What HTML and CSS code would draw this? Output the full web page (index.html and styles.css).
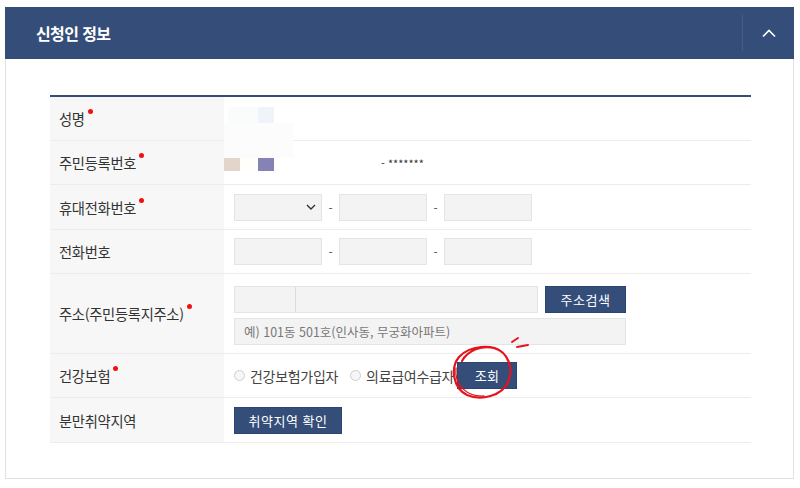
FILE: index.html
```html
<!DOCTYPE html>
<html lang="ko">
<head>
    <meta charset="UTF-8">
    <title>신청인 정보</title>
    <link rel="stylesheet" href="styles.css">
</head>
<body>
<!--신청인 정보-->
<div class="panel">
    <div class="panel-head">
        <h2 class="panel-title">신청인 정보</h2>
        <a href="#" class="toggle">
            <svg width="16" height="10" viewBox="0 0 16 10"><path d="M2 8.5 L8 2.5 L14 8.5" fill="none" stroke="#fff" stroke-width="1.6"/></svg>
        </a>
    </div>
    <div class="panel-body">
        <div class="form">
            <div class="row">
                <div class="label">성명<i class="req"></i></div>
                <div class="field">
                    <span class="blot b-pale"></span><span class="blot b-ice"></span>
                </div>
                <!--가려진 부분-->
                <span class="mask"></span>
            </div>
            <div class="row">
                <div class="label">주민등록번호<i class="req"></i></div>
                <div class="field field-flush">
                    <span class="blot b-beige"></span><span class="blot b-cream"></span><span class="blot b-purple"></span>
                    <span class="jumin">- *******</span>
                </div>
            </div>
            <div class="row row-45">
                <div class="label">휴대전화번호<i class="req"></i></div>
                <div class="field">
                    <div class="input select">
                        <svg width="10" height="6" viewBox="0 0 10 6"><path d="M1 1 L5 5 L9 1" fill="none" stroke="#333" stroke-width="1.4"/></svg>
                    </div>
                    <span class="dash">-</span>
                    <div class="input"></div>
                    <span class="dash">-</span>
                    <div class="input"></div>
                </div>
            </div>
            <div class="row">
                <div class="label">전화번호</div>
                <div class="field">
                    <div class="input"></div>
                    <span class="dash">-</span>
                    <div class="input"></div>
                    <span class="dash">-</span>
                    <div class="input"></div>
                </div>
            </div>
            <div class="row row-tall">
                <div class="label">주소(주민등록지주소)<i class="req"></i></div>
                <div class="field field-stack">
                    <div class="addr-line">
                        <div class="input addr">
                            <span class="zip"></span>
                        </div>
                        <a href="#" class="btn btn-addr">주소검색</a>
                    </div>
                    <div class="input detail">예) 101동 501호(인사동, 무궁화아파트)</div>
                </div>
            </div>
            <div class="row">
                <div class="label">건강보험<i class="req"></i></div>
                <div class="field">
                    <label class="radio"><span class="dot"></span>건강보험가입자</label>
                    <label class="radio"><span class="dot"></span>의료급여수급자</label>
                    <a href="#" class="btn btn-check">조회</a>
                    <!--빨간 표시-->
                    <svg class="scribble" width="85" height="70" viewBox="0 0 85 70">
                        <path d="M54 20 C44 12 22 13 11 25 C2 36 5 56 19 63 C33 69 54 64 60 50 C66 36 60 20 46 16 C34 13 20 18 14 29" fill="none" stroke="#e3141b" stroke-width="2.2" stroke-linecap="round"/>
                        <path d="M8 36 C6 54 20 65 36 64" fill="none" stroke="#e3141b" stroke-width="1.3" stroke-linecap="round"/>
                        <path d="M64 10 L70 6" fill="none" stroke="#e3141b" stroke-width="2" stroke-linecap="round"/>
                        <path d="M69 15 L80 13" fill="none" stroke="#e3141b" stroke-width="2" stroke-linecap="round"/>
                    </svg>
                </div>
            </div>
            <div class="row row-45">
                <div class="label">분만취약지역</div>
                <div class="field">
                    <a href="#" class="btn btn-area">취약지역 확인</a>
                </div>
            </div>
        </div>
    </div>
</div>
</body>
</html>
```

FILE: styles.css
```css
*{
    box-sizing: border-box;
}
body{
    margin: 0;
    background: #fff;
    font-family: "Noto Sans CJK KR", "Noto Sans", sans-serif;
    color: #333;
}
.panel{
    width: 789px;
    margin: 7px 0 0 5px;
    border: 1px solid #e1e1e1;
    border-top: 0;
}
.panel-head{
    display: flex;
    align-items: center;
    height: 52px;
    margin: 0 -1px;
    background: #344d79;
}
.panel-title{
    flex: 1;
    margin: 0;
    padding-left: 31px;
    font-size: 16px;
    font-weight: bold;
    color: #fff;
    letter-spacing: -0.6px;
}
.toggle{
    display: flex;
    align-items: center;
    justify-content: center;
    width: 52px;
    height: 36px;
    border-left: 1px solid #465e88;
}
.panel-body{
    padding: 36px 42px 35px 44px;
}
.form{
    border-top: 2px solid #344d79;
}
.row{
    position: relative;
    display: flex;
    height: 44px;
    border-bottom: 1px solid #ececec;
}
.row-45{
    height: 45px;
}
.row-tall{
    height: 80px;
}
.label{
    display: flex;
    align-items: center;
    width: 174px;
    padding-left: 9px;
    background: #f7f7f7;
    font-size: 14.3px;
    letter-spacing: -0.3px;
}
.req{
    display: inline-block;
    width: 5px;
    height: 5px;
    margin: -14px 0 0 3px;
    border-radius: 50%;
    background: #f01010;
}
.field{
    position: relative;
    display: flex;
    align-items: center;
    flex: 1;
    padding-left: 10px;
}
.field-flush{
    padding-left: 0;
}
.field-stack{
    flex-direction: column;
    align-items: flex-start;
    justify-content: center;
    gap: 5px;
    padding-top: 4px;
}
.blot{
    display: inline-block;
    width: 16px;
    height: 16px;
}
.row:first-child .blot{
    margin-top: -8px;
}
.b-pale{
    width: 30px;
    margin-left: -6px;
    background: #fafcfc;
}
.b-ice{
    background: #eef4f9;
}
.b-beige{
    background: #e2d6cc;
}
.b-cream{
    margin: 0 1px;
    background: #fffef8;
}
.b-purple{
    background: #8582b6;
}
.jumin{
    margin-left: 107px;
    margin-top: 0;
    font-size: 11px;
    color: #333;
}
.mask{
    position: absolute;
    left: 174px;
    top: 26px;
    width: 70px;
    height: 35px;
    background: #fcfcfc;
    z-index: 1;
}
.input{
    width: 88px;
    height: 27px;
    background: #f3f3f3;
    border: 1px solid #e4e4e4;
}
.select{
    display: flex;
    align-items: center;
    justify-content: flex-end;
    padding-right: 5px;
}
.dash{
    width: 17px;
    text-align: center;
    font-size: 12px;
    color: #555;
}
.addr-line{
    display: flex;
    gap: 7px;
}
.addr{
    display: flex;
    width: 304px;
}
.zip{
    width: 61px;
    border-right: 1px solid #dcdcdc;
}
.detail{
    width: 392px;
    padding-left: 9px;
    font-size: 12.5px;
    line-height: 25px;
    color: #777;
}
.btn{
    display: inline-flex;
    align-items: center;
    justify-content: center;
    height: 27px;
    background: #344d79;
    border: 1px solid #2c4470;
    color: #fff;
    font-size: 13px;
    text-decoration: none;
    letter-spacing: 0.5px;
}
.btn-addr{
    width: 81px;
}
.btn-check{
    width: 60px;
    margin-left: 3px;
}
.btn-area{
    width: 108px;
}
.radio{
    display: flex;
    align-items: center;
    font-size: 14px;
    color: #444;
    letter-spacing: -0.3px;
}
.radio .dot{
    width: 11px;
    height: 11px;
    margin-right: 5px;
    border: 1px solid #cfcfcf;
    border-radius: 50%;
    background: #f6f6f6;
}
.radio + .radio{
    margin-left: 12px;
}
.scribble{
    position: absolute;
    left: 224px;
    top: -22px;
    z-index: 2;
}
```
